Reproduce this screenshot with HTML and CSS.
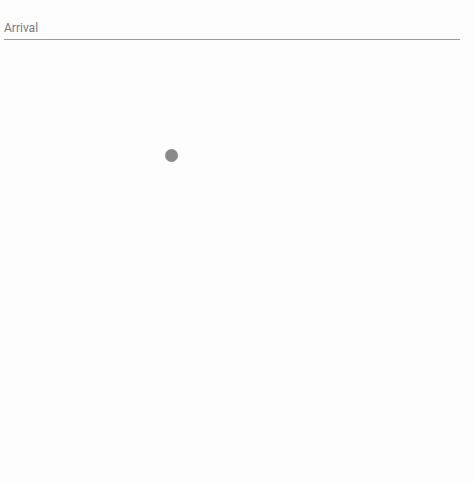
FILE: index.html
```html
<!DOCTYPE html>
<html>
<head>
<meta charset="utf-8">
<link rel="stylesheet" href="styles.css">
</head>
<body>
<div class="page">
  <div class="field">
    <span class="label">Arrival</span>
  </div>
  <div class="dot"></div>
</div>
</body>
</html>
```
FILE: styles.css
```css
html, body {
  margin: 0;
  padding: 0;
  background: #fdfdfd;
}
.page {
  padding: 21px 4px 0 4px;
  font-family: Roboto, "Liberation Sans", sans-serif;
}
.field {
  width: 456px;
  border-bottom: 1px solid #9a9a9a;
  padding-bottom: 3px;
}
.label {
  display: block;
  font-size: 12px;
  line-height: 15px;
  color: #7a7a7a;
}
.dot {
  width: 13px;
  height: 13px;
  border-radius: 50%;
  background: #8a8a8a;
  margin: 109px 0 0 161px;
}
```
